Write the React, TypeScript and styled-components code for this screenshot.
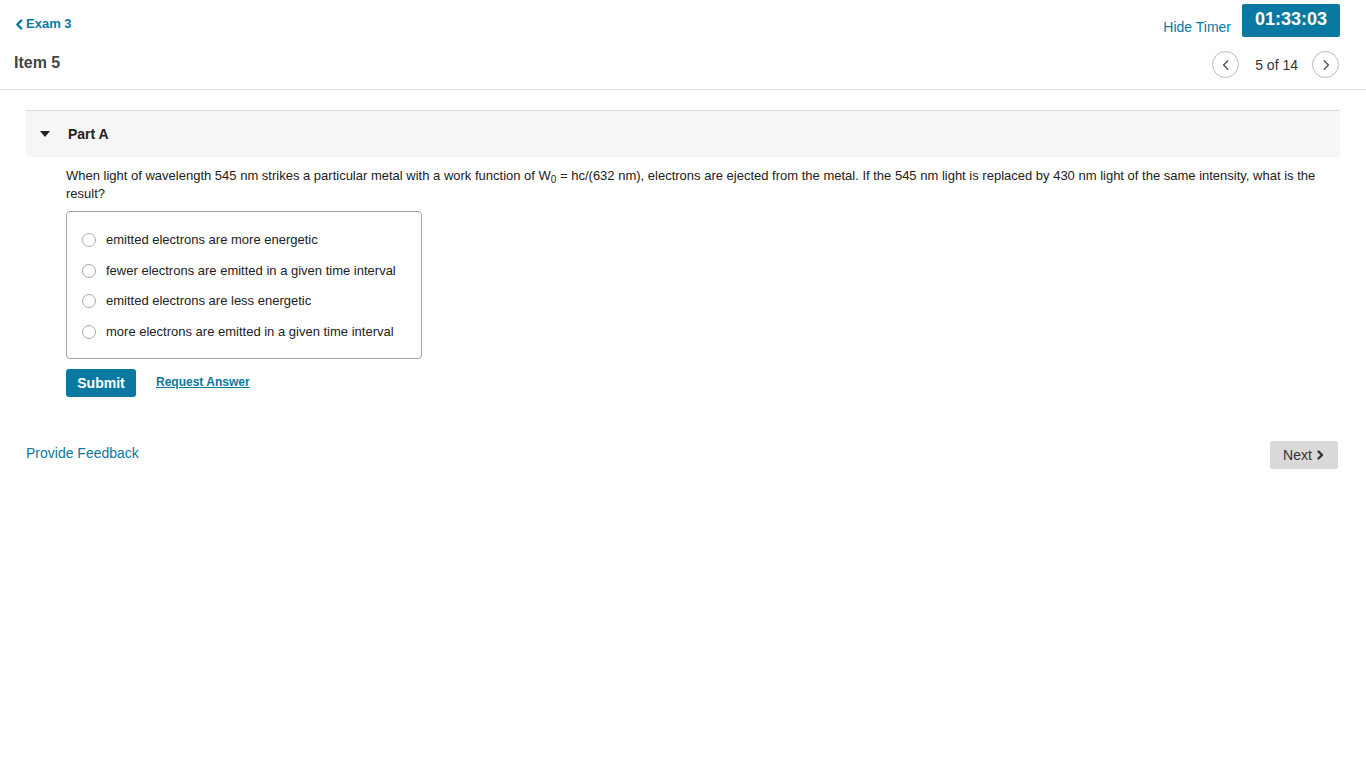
import React from 'react';
import styled, { createGlobalStyle } from 'styled-components';

const TEAL = '#0a79a1';

const GlobalStyle = createGlobalStyle`
    body {
        margin: 0;
        background: #fff;
        font-family: "Liberation Sans", Arial, sans-serif;
        color: #333;
    }
`;

// STYLE
const Page = styled.div`
    width: 1366px;
    min-height: 768px;
`;

const Header = styled.header`
    display: flex;
    justify-content: space-between;
    border-bottom: 1px solid #dcdcdc;
    height: 90px;
    box-sizing: border-box;
    padding: 0 26px 0 14px;
`;

const HeaderLeft = styled.div`
    display: flex;
    flex-direction: column;
`;

const BackLink = styled.a`
    display: flex;
    align-items: center;
    gap: 1px;
    margin-top: 16px;
    color: ${TEAL};
    font-size: 13px;
    font-weight: bold;
    text-decoration: none;
    line-height: 16px;
`;

const ItemTitle = styled.h1`
    margin: 21px 0 0;
    font-size: 16px;
    font-weight: bold;
    color: #444;
    line-height: 20px;
`;

const HeaderRight = styled.div`
    display: flex;
    flex-direction: column;
    align-items: flex-end;
    padding-top: 4px;
`;

const TimerRow = styled.div`
    display: flex;
    align-items: flex-end;
    gap: 11px;
`;

const HideTimer = styled.a`
    color: ${TEAL};
    font-size: 14px;
    line-height: 16px;
    margin-bottom: 2px;
`;

const TimerBox = styled.div`
    width: 98px;
    height: 33px;
    box-sizing: border-box;
    background: ${TEAL};
    color: #fff;
    border-radius: 2px;
    font-size: 18px;
    font-weight: bold;
    display: flex;
    align-items: center;
    justify-content: center;
    padding-bottom: 3px;
`;

const Pager = styled.div`
    display: flex;
    align-items: center;
    margin-top: 14px;
    margin-right: 1px;
`;

const CircleBtn = styled.button`
    width: 27px;
    height: 27px;
    border-radius: 50%;
    border: 1px solid #bbb;
    background: #fff;
    display: flex;
    align-items: center;
    justify-content: center;
    padding: 0;
    color: #555;
`;

const PageCount = styled.span`
    font-size: 14px;
    color: #333;
    margin: 0 14px 0 16px;
`;

const Main = styled.main`
    padding: 20px 26px 0;
`;

const PartHeader = styled.div`
    display: flex;
    align-items: center;
    height: 46px;
    background: #f6f6f6;
    border-top: 1px solid #dcdcdc;
    padding-left: 14px;
    gap: 18px;
`;

const PartTitle = styled.span`
    font-size: 14px;
    font-weight: bold;
    color: #222;
`;

const PartBody = styled.div`
    padding: 10px 24px 0 40px;
`;

const Question = styled.p`
    margin: 0;
    font-size: 13px;
    line-height: 18px;
    color: #222;
`;

const Sub = styled.span`
    font-size: 10px;
    line-height: 0;
    position: relative;
    top: 3px;
`;

const OptionsBox = styled.div`
    width: 356px;
    box-sizing: border-box;
    margin-top: 8px;
    border: 1px solid #a6a6a6;
    border-radius: 4px;
    padding: 19px 0 17px 15px;
    display: flex;
    flex-direction: column;
    gap: 12.5px;
`;

const Option = styled.label`
    display: flex;
    align-items: center;
    gap: 10px;
    font-size: 13px;
    color: #222;
    line-height: 18px;
    height: 18px;
`;

const Radio = styled.span`
    width: 14px;
    height: 14px;
    border-radius: 50%;
    border: 1px solid #aaa;
    background: #fff;
    box-sizing: border-box;
`;

const Actions = styled.div`
    display: flex;
    align-items: center;
    gap: 20px;
    margin-top: 10px;
`;

const SubmitButton = styled.button`
    width: 70px;
    height: 28px;
    border: none;
    border-radius: 3px;
    background: ${TEAL};
    color: #fff;
    font-family: inherit;
    font-size: 14px;
    font-weight: bold;
`;

const RequestLink = styled.a`
    color: ${TEAL};
    font-size: 12px;
    font-weight: bold;
    text-decoration: underline;
    margin-bottom: 2px;
`;

const Footer = styled.div`
    display: flex;
    justify-content: space-between;
    align-items: center;
    padding: 44px 28px 0 26px;
`;

const FeedbackLink = styled.a`
    color: ${TEAL};
    font-size: 14px;
    margin-bottom: 3px;
`;

const NextButton = styled.button`
    display: flex;
    align-items: center;
    gap: 3px;
    width: 68px;
    height: 28px;
    justify-content: center;
    border: none;
    border-radius: 2px;
    background: #d9d9d9;
    color: #333;
    font-family: inherit;
    font-size: 14px;
`;

const Chevron: React.FC<{ dir: 'left' | 'right'; size?: number; weight?: number }> = ({ dir, size = 10, weight = 1.5 }) => (
    <svg width={size} height={size} viewBox="0 0 10 10" fill="none" stroke="currentColor" strokeWidth={weight} strokeLinecap="round" strokeLinejoin="round">
        {dir === 'left' ? <path d="M6.5 1.5 L3 5 L6.5 8.5" /> : <path d="M3.5 1.5 L7 5 L3.5 8.5" />}
    </svg>
);

const options = [
    'emitted electrons are more energetic',
    'fewer electrons are emitted in a given time interval',
    'emitted electrons are less energetic',
    'more electrons are emitted in a given time interval',
];

const App: React.FC = () => (
    <Page>
        <GlobalStyle />
        {/* SECTION :: HEADER */}
        <Header>
            <HeaderLeft>
                <BackLink>
                    <Chevron dir="left" size={11} weight={2.2} />
                    Exam 3
                </BackLink>
                <ItemTitle>Item 5</ItemTitle>
            </HeaderLeft>
            <HeaderRight>
                <TimerRow>
                    <HideTimer>Hide Timer</HideTimer>
                    <TimerBox>01:33:03</TimerBox>
                </TimerRow>
                <Pager>
                    <CircleBtn>
                        <Chevron dir="left" size={12} weight={1.2} />
                    </CircleBtn>
                    <PageCount>5 of 14</PageCount>
                    <CircleBtn>
                        <Chevron dir="right" size={12} weight={1.2} />
                    </CircleBtn>
                </Pager>
            </HeaderRight>
        </Header>

        {/* SECTION :: PART A */}
        <Main>
            <PartHeader>
                <svg width="10" height="6" viewBox="0 0 10 6">
                    <path d="M0 0 H10 L5 6 Z" fill="#222" />
                </svg>
                <PartTitle>Part A</PartTitle>
            </PartHeader>
            <PartBody>
                <Question>
                    When light of wavelength 545 nm strikes a particular metal with a work function of W<Sub>0</Sub> = hc/(632 nm), electrons are ejected from
                    the metal. If the 545 nm light is replaced by 430 nm light of the same intensity, what is the result?
                </Question>
                <OptionsBox>
                    {options.map((o) => (
                        <Option key={o}>
                            <Radio />
                            {o}
                        </Option>
                    ))}
                </OptionsBox>
                <Actions>
                    <SubmitButton>Submit</SubmitButton>
                    <RequestLink>Request Answer</RequestLink>
                </Actions>
            </PartBody>
        </Main>

        {/* SECTION :: FOOTER */}
        <Footer>
            <FeedbackLink>Provide Feedback</FeedbackLink>
            <NextButton>
                Next
                <Chevron dir="right" size={10} weight={2.4} />
            </NextButton>
        </Footer>
    </Page>
);

export default App;
